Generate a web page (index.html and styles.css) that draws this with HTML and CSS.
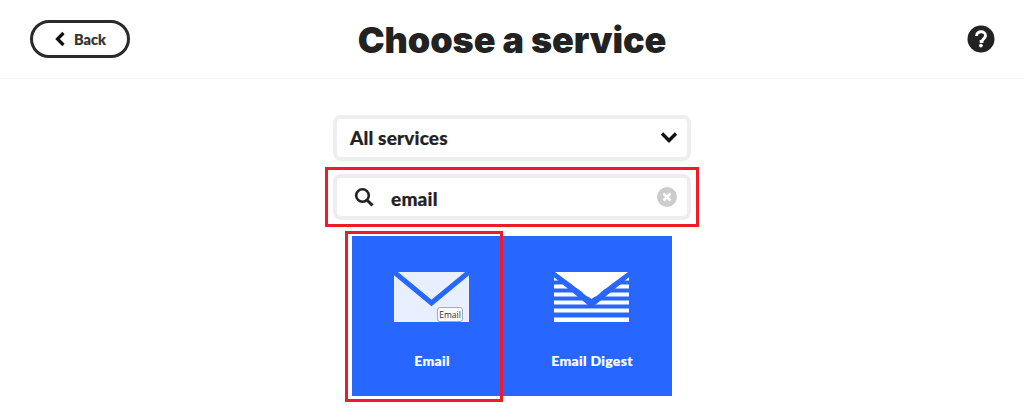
FILE: index.html
```html
<!DOCTYPE html>
<html lang="en">
<head>
<meta charset="utf-8">
<title>Choose a service</title>
<link rel="stylesheet" href="styles.css">
</head>
<body>
<header class="header">
  <a class="back" href="#">
    <svg class="back-icon" viewBox="0 0 12 16"><path d="M9.500 2 3.500 8l6 6" fill="none" stroke="#111" stroke-width="3.200"/></svg>
    <span>Back</span>
  </a>
  <h1 class="title">Choose a service</h1>
  <svg class="help" viewBox="0 0 28 28">
    <circle cx="14" cy="14" r="13.500" fill="#222"/>
    <path d="M9.600 11.200c0-2.700 2-4.200 4.500-4.200s4.400 1.500 4.400 3.800c0 3.200-3.500 3.300-3.500 6h-2.300" fill="none" stroke="#fff" stroke-width="2.900" transform="translate(0 -.3)"/>
    <circle cx="13.900" cy="20.600" r="1.900" fill="#fff"/>
  </svg>
</header>
<main class="main">
  <div class="field select">
    <span>All services</span>
    <svg class="chev" viewBox="0 0 18 12"><path d="M2 2.500 9 9.500l7-7" fill="none" stroke="#111" stroke-width="3.400"/></svg>
  </div>
  <div class="search-wrap">
    <div class="field search">
      <svg class="mag" viewBox="0 0 20 20"><circle cx="8.500" cy="8.500" r="6.300" fill="none" stroke="#222" stroke-width="2.600"/><path d="m13 13 5.500 5.500" stroke="#222" stroke-width="3"/></svg>
      <span class="query">email</span>
      <svg class="clear" viewBox="0 0 20 20"><circle cx="10" cy="10" r="10" fill="#ccc"/><path d="m6.500 6.500 7 7m0-7-7 7" stroke="#fff" stroke-width="2.600"/></svg>
    </div>
  </div>
  <div class="tiles">
    <div class="tile">
      <svg class="tile-icon" viewBox="0 0 75 50">
        <path d="M0 0h75v50H0z" fill="#e8efff"/>
        <path d="M0 0 37.500 31 75 0" fill="none" stroke="#2767ff" stroke-width="5"/>
      </svg>
      <span class="tip">Email</span>
      <span class="tile-name">Email</span>
    </div>
    <div class="tile">
      <svg class="tile-icon" viewBox="0 0 75 50">
        <path d="M0 4.500h75v4H0zM0 12.500h75v4H0zM0 20.500h75v4H0zM0 28.500h75v4H0zM0 36.500h75v4H0zM0 45.500h75v4.500H0z" fill="#fff"/>
        <path d="M-4 -2 37.500 32 79 -2" fill="none" stroke="#2767ff" stroke-width="6"/>
        <path d="M1 0h73L37.500 27z" fill="#fff"/>
      </svg>
      <span class="tile-name">Email Digest</span>
    </div>
    <div class="mark mark-tile"></div>
  </div>
</main>
</body>
</html>
```
FILE: styles.css
```css
* { box-sizing: border-box; }
html, body { margin: 0; height: 419px; overflow: hidden; background: #fff; }
body { font-family: Lato, "Open Sans", sans-serif; color: #222; }

.header {
  position: relative;
  height: 79px;
  display: flex;
  align-items: center;
  justify-content: center;
  border-bottom: 1px solid #f1f1f1;
}
.back {
  position: absolute;
  left: 30px;
  top: 20px;
  width: 100px;
  height: 38px;
  display: flex;
  align-items: center;
  justify-content: center;
  gap: 8px;
  border: 3px solid #2a2a2a;
  border-radius: 19px;
  color: #333;
  font-size: 14.500px;
  font-weight: 900;
  text-decoration: none;
  -webkit-text-stroke: .2px #333;
}
.back-icon { width: 12px; height: 16px; }
.title { margin: 2px 0 0; font-family: Inter, Lato, sans-serif; font-size: 36px; font-weight: 900; color: #222; line-height: 1; letter-spacing: -.1px; }
.help { position: absolute; left: 967px; top: 25px; width: 28px; height: 28px; }

.main { display: flex; flex-direction: column; align-items: center; padding-top: 36px; }
.field {
  width: 358px;
  height: 46px;
  display: flex;
  align-items: center;
  border: 4px solid #eee;
  border-radius: 8px;
  background: #fff;
  font-size: 19px;
  font-weight: 900;
  color: #222;
  -webkit-text-stroke: .2px #222;
}
.select { justify-content: space-between; padding: 0 9px 2px 13px; letter-spacing: .15px; }
.chev { width: 18px; height: 12px; }
.search-wrap {
  width: 374px;
  height: 60px;
  margin-top: 6px;
  display: flex;
  align-items: center;
  justify-content: center;
  border: 3px solid #ee1c2b;
}
.search { padding: 0 10px 0 17px; }
.mag { width: 20px; height: 20px; flex: none; }
.query { flex: 1; margin-left: 17px; padding-top: 2px; letter-spacing: .2px; }
.clear { width: 20px; height: 20px; flex: none; }

.tiles { position: relative; display: flex; margin-top: 9px; }
.tile {
  position: relative;
  width: 160px;
  height: 160px;
  background: #2767ff;
  display: flex;
  flex-direction: column;
  align-items: center;
}
.tile-icon { width: 75px; height: 50px; margin: 36px 1px 0 0; overflow: hidden; }
.tile-name { margin-top: 30px; color: #fff; font-size: 14px; font-weight: 900; line-height: 18px; letter-spacing: .3px; -webkit-text-stroke: .2px #fff; }
.tip {
  position: absolute;
  left: 85px;
  top: 71px;
  width: 26px;
  height: 15px;
  border: 1px solid #aaa;
  border-radius: 3px;
  background: #fafafa;
  color: #333;
  font: 8.500px/13px "Open Sans", sans-serif;
  text-align: center;
  -webkit-text-stroke: 0;
}
.mark { position: absolute; border: 3px solid #ee1c2b; }
.mark-tile { left: -7px; top: -5px; width: 158px; height: 171px; }
```
